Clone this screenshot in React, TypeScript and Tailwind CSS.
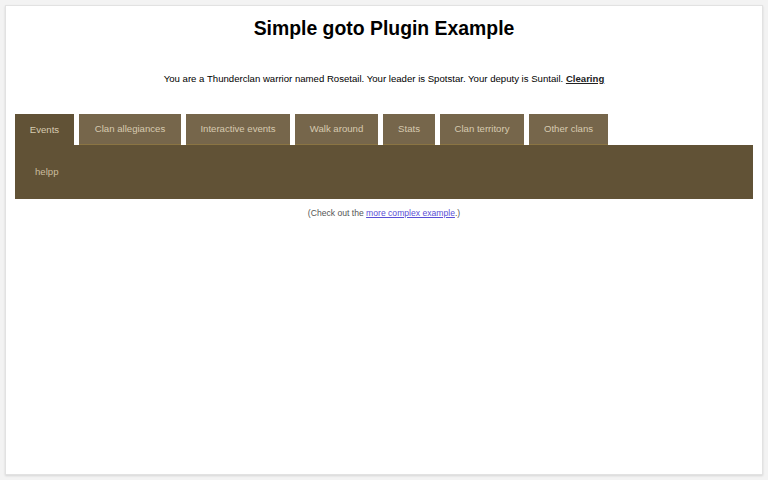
import { useState } from "react";

const tabs = [
  { label: "Events", w: "w-[59px]" },
  { label: "Clan allegiances", w: "w-[102px]" },
  { label: "Interactive events", w: "w-[104px]" },
  { label: "Walk around", w: "w-[83px]" },
  { label: "Stats", w: "w-[52px]" },
  { label: "Clan territory", w: "w-[84px]" },
  { label: "Other clans", w: "w-[79px]" },
];

export default function App() {
  const [active, setActive] = useState(0);

  return (
    <div className="min-h-[480px] bg-[#f3f3f3] p-[5px] font-['Liberation_Sans',Arial,sans-serif]">
      <div className="h-[470px] border border-[#e2e2e2] bg-white px-[9px] shadow-[0_1px_2px_rgba(0,0,0,0.12)]">
        <h1 className="pt-[9px] text-center text-[19.4px] font-bold leading-[26px] text-black">
          Simple goto Plugin Example
        </h1>

        <p className="mt-[31px] text-center text-[9.6px] leading-[14px] text-black">
          You are a Thunderclan warrior named Rosetail. Your leader is Spotstar. Your deputy is Suntail.{" "}
          <a href="#" className="font-bold text-[#222] underline">
            Clearing
          </a>
        </p>

        {/* tab strip */}
        <div className="mt-[28px] flex gap-[5px]">
          {tabs.map((t, i) => (
            <button
              key={t.label}
              onClick={() => setActive(i)}
              className={
                i === active
                  ? `${t.w} h-[31px] bg-[#615236] pt-[1px] text-[9.6px] text-[#d6cab0]`
                  : `${t.w} h-[31px] border-b border-[#8a7443] bg-[#76664b] pt-[1px] text-[9.6px] text-[#d6cab0]`
              }
            >
              {t.label}
            </button>
          ))}
        </div>

        <div className="flex h-[54px] items-center bg-[#615236] px-[20px] text-[9.6px] text-[#cbbd9f]">
          helpp
        </div>

        <p className="mt-[8px] text-center text-[8.6px] leading-[12px] text-[#555]">
          (Check out the{" "}
          <a href="#" className="text-[#5a4fd6] underline">
            more complex example
          </a>
          .)
        </p>
      </div>
    </div>
  );
}
